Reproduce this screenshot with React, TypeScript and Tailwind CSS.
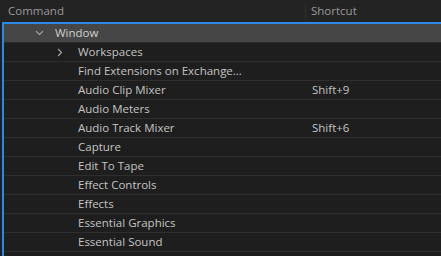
import React from 'react';

type Row = { label: string; shortcut?: string; hasChildren?: boolean };

const rows: Row[] = [
  { label: 'Workspaces', hasChildren: true },
  { label: 'Find Extensions on Exchange...' },
  { label: 'Audio Clip Mixer', shortcut: 'Shift+9' },
  { label: 'Audio Meters' },
  { label: 'Audio Track Mixer', shortcut: 'Shift+6' },
  { label: 'Capture' },
  { label: 'Edit To Tape' },
  { label: 'Effect Controls' },
  { label: 'Effects' },
  { label: 'Essential Graphics' },
  { label: 'Essential Sound' },
  { label: '' },
];

function ChevronDown() {
  return (
    <svg width="9" height="6" viewBox="0 0 9 6" className="shrink-0">
      <path d="M1 1.2 L4.5 4.5 L8 1.2" fill="none" stroke="#a8a8a8" strokeWidth="1.1" />
    </svg>
  );
}

function ChevronRight() {
  return (
    <svg width="6" height="9" viewBox="0 0 6 9" className="shrink-0">
      <path d="M1.2 1 L4.5 4.5 L1.2 8" fill="none" stroke="#a8a8a8" strokeWidth="1.1" />
    </svg>
  );
}

export default function App() {
  return (
    <div
      className="w-[441px] h-[256px] overflow-hidden bg-[#1e1e1e] text-[11.5px] text-[#c4c4c4]"
      style={{ fontFamily: '"Open Sans", "Noto Sans", sans-serif' }}
    >
      {/* header */}
      <div className="flex h-[22px] items-center bg-[#232323] text-[#9a9a9a]">
        <div className="w-[305px] pl-[8px]">Command</div>
        <div className="h-[13px] w-px bg-[#2f2f2f]" />
        <div className="pl-[5px]">Shortcut</div>
      </div>

      <div className="border-t-2 border-l-2 border-t-[#2b8ae6] border-l-[#2b8ae6] ml-[2px]">
        <div className="flex h-[19px] items-center bg-[#464646] border-b border-[#2a2a2a]">
          <div className="w-[31px]" />
          <ChevronDown />
          <div className="pl-[11px] text-[#d0d0d0]">Window</div>
        </div>
        {rows.map((r, i) => (
          <div key={i} className="flex h-[19px] items-center border-b border-[#2e2e2e]">
            <div className="flex w-[301px] items-center">
              <div className="w-[53px]" />
              <div className="w-[21px] flex">{r.hasChildren && <ChevronRight />}</div>
              <div className="whitespace-nowrap">{r.label}</div>
            </div>
            {r.shortcut && <div className="pl-[7px]">{r.shortcut}</div>}
          </div>
        ))}
      </div>
    </div>
  );
}
